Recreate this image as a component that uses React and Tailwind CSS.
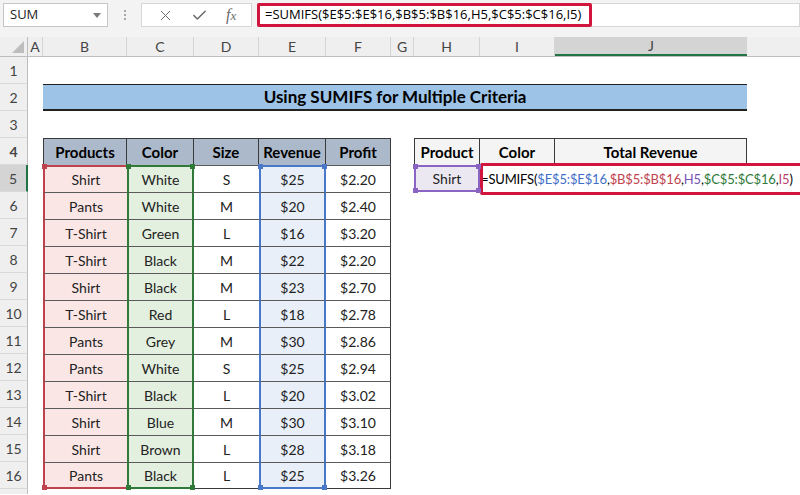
import React from "react";
import { X, Check } from "lucide-react";

const data = [
  ["Shirt", "White", "S", "$25", "$2.20"],
  ["Pants", "White", "M", "$20", "$2.40"],
  ["T-Shirt", "Green", "L", "$16", "$3.20"],
  ["T-Shirt", "Black", "M", "$22", "$2.20"],
  ["Shirt", "Black", "M", "$23", "$2.70"],
  ["T-Shirt", "Red", "L", "$18", "$2.78"],
  ["Pants", "Grey", "M", "$30", "$2.86"],
  ["Pants", "White", "S", "$25", "$2.94"],
  ["T-Shirt", "Black", "L", "$20", "$3.02"],
  ["Shirt", "Blue", "M", "$30", "$3.10"],
  ["Shirt", "Brown", "L", "$28", "$3.18"],
  ["Pants", "Black", "L", "$25", "$3.26"],
];

// column header strip: label + width class
const colHeads = [
  ["A", "w-[15px]"],
  ["B", "w-[84px]"],
  ["C", "w-[67px]"],
  ["D", "w-[65px]"],
  ["E", "w-[67px]"],
  ["F", "w-[65px]"],
  ["G", "w-[23px]"],
  ["H", "w-[66px]"],
  ["I", "w-[75px]"],
];

// main table columns (B..F) with the range highlight styles from edit mode
const mainCols = [
  {
    w: "w-[84px]",
    body: "bg-[#fbe6e6] border-l-2 border-l-[#c0424e]",
    first: "border-t-2 border-t-[#c0424e]",
    mid: "border-t border-t-[#5a5a5a]",
    last: "border-b-2 border-b-[#c0424e]",
    handle: "bg-[#c0424e]",
  },
  {
    w: "w-[67px]",
    body: "bg-[#e3f0df] border-x-2 border-x-[#2f7a38]",
    first: "border-t-2 border-t-[#2f7a38]",
    mid: "border-t border-t-[#5a5a5a]",
    last: "border-b-2 border-b-[#2f7a38]",
    handle: "bg-[#2f7a38]",
    handleRight: true,
  },
  {
    w: "w-[65px]",
    body: "bg-white",
    first: "border-t border-t-[#5a5a5a]",
    mid: "border-t border-t-[#5a5a5a]",
    last: "border-b border-b-[#3a3a3a]",
  },
  {
    w: "w-[67px]",
    body: "bg-[#e9eff9] border-x-2 border-x-[#4a78c8]",
    first: "border-t-2 border-t-[#4a78c8]",
    mid: "border-t border-t-[#5a5a5a]",
    last: "border-b-2 border-b-[#4a78c8]",
    handle: "bg-[#4a78c8]",
    handleRight: true,
  },
  {
    w: "w-[65px]",
    body: "bg-white border-r border-r-[#3a3a3a]",
    first: "border-t border-t-[#5a5a5a]",
    mid: "border-t border-t-[#5a5a5a]",
    last: "border-b border-b-[#3a3a3a]",
  },
];

const cellFont = "font-['Lato','Liberation_Sans',sans-serif]";

function RowHead({ n, selected }) {
  return (
    <div
      className={`w-[28px] shrink-0 flex items-center justify-center text-[14px] text-[#444] border-b border-b-[#dadada] ${
        selected
          ? "bg-[#d4d4d4] border-r-2 border-r-[#217346]"
          : "bg-[#efefef] border-r border-r-[#bdbdbd]"
      }`}
    >
      {n}
    </div>
  );
}

function Handle({ color, pos }) {
  return <span className={`absolute z-10 w-[5px] h-[5px] ${color} ${pos}`} />;
}

function FormulaText() {
  return (
    <span className="whitespace-nowrap text-[13px] tracking-[-0.15px]">
      <span className="text-black">=SUMIFS(</span>
      <span className="text-[#3f6fc6]">$E$5:$E$16</span>
      <span className="text-black">,</span>
      <span className="text-[#c0424e]">$B$5:$B$16</span>
      <span className="text-black">,</span>
      <span className="text-[#7a55b3]">H5</span>
      <span className="text-black">,</span>
      <span className="text-[#2f7a38]">$C$5:$C$16</span>
      <span className="text-black">,</span>
      <span className="text-[#b8456e]">I5</span>
      <span className="text-black">)</span>
    </span>
  );
}

export default function App() {
  return (
    <div className={`w-[800px] h-[495px] overflow-hidden bg-white ${cellFont}`}>
      {/* Formula bar */}
      <div className="h-[37px] bg-[#f3f3f3] flex items-start pt-[3px] font-['Open_Sans','Noto_Sans',sans-serif]">
        <div className="ml-[3px] w-[105px] h-[24px] bg-white border border-[#c6c6c6] flex items-center justify-between pl-[6px] pr-[6px] text-[13px] text-[#222]">
          <span>SUM</span>
          <svg width="8" height="5" viewBox="0 0 8 5">
            <path d="M0 0h8L4 5z" fill="#7a7a7a" />
          </svg>
        </div>
        <div className="w-[33px] h-[24px] flex flex-col items-center justify-center gap-[2px]">
          <span className="w-[2px] h-[2px] bg-[#a8a8a8]" />
          <span className="w-[2px] h-[2px] bg-[#a8a8a8]" />
          <span className="w-[2px] h-[2px] bg-[#a8a8a8]" />
        </div>
        <div className="w-[111px] h-[24px] bg-white border border-[#d6d6d6] flex items-center justify-around px-[6px]">
          <X size={17} strokeWidth={1.4} className="text-[#6b6b6b]" />
          <Check size={17} strokeWidth={2.2} className="text-[#6b6b6b]" />
          <span className="font-['Liberation_Serif',serif] italic text-[16px] text-[#6b6b6b] leading-none">
            f<span className="text-[13px]">x</span>
          </span>
        </div>
        <div className="ml-[5px] flex-1 h-[24px] bg-white border border-[#d6d6d6] flex items-center">
          <div className="w-[335px] h-[24px] -ml-px border-[3px] border-[#d0163c] rounded-[2px] flex items-center pl-[5px] text-[13px] text-black">
            <span className="whitespace-nowrap">=SUMIFS($E$5:$E$16,$B$5:$B$16,H5,$C$5:$C$16,I5)</span>
          </div>
        </div>
      </div>

      {/* Column headers */}
      <div className="flex h-[20px] bg-[#efefef] border-b border-b-[#bdbdbd] text-[14px] text-[#444]">
        <div className="w-[28px] shrink-0 border-r border-r-[#bdbdbd] flex items-end justify-end pr-[3px] pb-[3px]">
          <svg width="12" height="12" viewBox="0 0 12 12">
            <path d="M12 0V12H0z" fill="#bdbdbd" />
          </svg>
        </div>
        {colHeads.map(([l, w]) => (
          <div key={l} className={`${w} shrink-0 flex items-center justify-center border-r border-r-[#d4d4d4]`}>
            {l}
          </div>
        ))}
        <div className="w-[192px] shrink-0 flex items-center justify-center bg-[#d4d4d4] border-b-2 border-b-[#217346]">
          J
        </div>
        <div className="flex-1" />
      </div>

      {/* Row 1 */}
      <div className="flex h-[27px]">
        <RowHead n={1} />
      </div>

      {/* Row 2: title */}
      <div className="flex h-[27px]">
        <RowHead n={2} />
        <div className="w-[15px] shrink-0" />
        <div className="w-[704px] shrink-0 bg-[#9dc3e6] border-t border-t-[#222] border-b-2 border-b-[#222] flex items-center justify-center text-[17px] font-bold text-black">
          Using SUMIFS for Multiple Criteria
        </div>
      </div>

      {/* Row 3 */}
      <div className="flex h-[27px]">
        <RowHead n={3} />
      </div>

      {/* Row 4: headers */}
      <div className="flex h-[27px] text-[15px] font-bold text-black">
        <RowHead n={4} />
        <div className="w-[15px] shrink-0" />
        {["Products", "Color", "Size", "Revenue", "Profit"].map((h, i) => (
          <div
            key={h}
            className={`${mainCols[i].w} shrink-0 bg-[#acb9ca] border-t border-r border-[#3a3a3a] flex items-center justify-center ${
              i === 0 ? "border-l" : ""
            }`}
          >
            {h}
          </div>
        ))}
        <div className="w-[23px] shrink-0" />
        <div className="w-[66px] shrink-0 bg-[#f4f4f4] border-t border-l border-r border-[#3a3a3a] flex items-center justify-center">
          Product
        </div>
        <div className="w-[75px] shrink-0 bg-[#f4f4f4] border-t border-r border-[#3a3a3a] flex items-center justify-center">
          Color
        </div>
        <div className="w-[192px] shrink-0 bg-[#f4f4f4] border-t border-r border-[#3a3a3a] flex items-center justify-center">
          Total Revenue
        </div>
      </div>

      {/* Rows 5..16 */}
      {data.map((row, r) => {
        const isFirst = r === 0;
        const isLast = r === data.length - 1;
        return (
          <div key={r} className="flex h-[27px] text-[14px] text-[#222]">
            <RowHead n={r + 5} selected={isFirst} />
            <div className="w-[15px] shrink-0" />
            {row.map((v, i) => {
              const c = mainCols[i];
              return (
                <div
                  key={i}
                  className={`relative ${c.w} shrink-0 flex items-center justify-center ${c.body} ${
                    isFirst ? c.first : c.mid
                  } ${isLast ? c.last : ""}`}
                >
                  {v}
                  {c.handle && isFirst && (
                    <Handle color={c.handle} pos={c.handleRight ? "-top-[3px] -right-[3px]" : "-top-[3px] -left-[3px]"} />
                  )}
                  {c.handle && isLast && (
                    <Handle color={c.handle} pos={c.handleRight ? "-bottom-[3px] -right-[3px]" : "-bottom-[3px] -left-[3px]"} />
                  )}
                  {c.handleRight && isFirst && <Handle color={c.handle} pos="-top-[3px] -left-[3px]" />}
                  {c.handleRight && isLast && <Handle color={c.handle} pos="-bottom-[3px] -left-[3px]" />}
                </div>
              );
            })}
            {isFirst && (
              <>
                <div className="w-[23px] shrink-0" />
                <div className="relative w-[66px] shrink-0 bg-[#ece8f1] border-2 border-[#8a64c2] flex items-center justify-center">
                  Shirt
                  <Handle color="bg-[#8a64c2]" pos="-top-[3px] -left-[3px]" />
                  <Handle color="bg-[#8a64c2]" pos="-top-[3px] -right-[3px]" />
                  <Handle color="bg-[#8a64c2]" pos="-bottom-[3px] -left-[3px]" />
                  <Handle color="bg-[#8a64c2]" pos="-bottom-[3px] -right-[3px]" />
                </div>
                <div className="relative flex-1 min-w-0 flex items-center">
                  <div className="absolute -top-[2px] -bottom-[3px] left-0 -right-[4px] border-[3px] border-[#d0163c] rounded-[2px]" />
                  <div className="pl-[1px]">
                    <FormulaText />
                  </div>
                </div>
              </>
            )}
          </div>
        );
      })}

      {/* Row 17 (only its top edge is in view) */}
      <div className="flex h-[5px]">
        <div className="w-[28px] shrink-0 bg-[#efefef] border-r border-r-[#bdbdbd]" />
      </div>
    </div>
  );
}
